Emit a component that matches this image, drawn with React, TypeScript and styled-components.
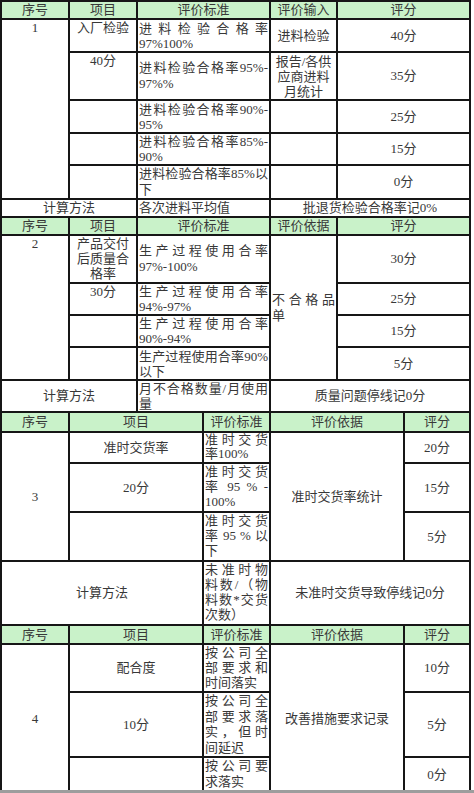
import React from 'react';
import styled, { createGlobalStyle } from 'styled-components';

const Global = createGlobalStyle`
  html, body { margin: 0; padding: 0; background: #9d9d9d; }
  #root { width: 474px; }
`;

const Page = styled.div`
  width: 474px;
  height: 790px;
  overflow: hidden;
  background: #fff;
  font-family: "Liberation Serif", "Noto Sans CJK SC", serif;
  font-size: 13px;
  line-height: 16px;
  color: #383838;
`;

const Section = styled.div<{ $cols: string; $rows: string }>`
  display: grid;
  width: 471px;
  box-sizing: border-box;
  grid-template-columns: ${p => p.$cols};
  grid-template-rows: ${p => p.$rows};
  gap: 2px;
  padding: 2px 2px 0;
  background: #161616;
`;

type V = 'start' | 'center';
type H = 'left' | 'center';

const Cell = styled.div<{ $span?: number; $rows?: number; $v?: V; $h?: H; $head?: boolean; $lh?: number }>`
  grid-column: span ${p => p.$span ?? 1};
  grid-row: span ${p => p.$rows ?? 1};
  background: ${p => (p.$head ? '#c9f2c9' : '#ffffff')};
  display: flex;
  flex-direction: column;
  justify-content: ${p => p.$v ?? 'center'};
  text-align: ${p => p.$h ?? 'center'};
  line-height: ${p => (p.$lh ? `${p.$lh}px` : 'inherit')};
  padding: 0 1px;
  overflow: hidden;
  min-width: 0;
`;

const Line = styled.span<{ $j?: boolean }>`
  display: block;
  text-align: ${p => (p.$j ? 'justify' : 'inherit')};
  text-align-last: ${p => (p.$j ? 'justify' : 'auto')};
`;

const Head = ({ children }: { children: React.ReactNode }) => <Cell $head>{children}</Cell>;

const Std = ({ lines, v = 'center', lh }: { lines: string[]; v?: V; lh?: number }) => (
  <Cell $v={v} $h="left" $lh={lh}>
    {lines.map((l, i) => (
      <Line key={i} $j={i < lines.length - 1}>
        {l}
      </Line>
    ))}
  </Cell>
);

const Empty = () => <Cell />;

const COLS_A = '66px 66px 131px 65px 131px';
const COLS_B = '66px 132px 65px 132px 64px';

export default function App() {
  return (
    <Page>
      <Global />
      <Section $cols={COLS_A} $rows="16px 31px 46px 31px 30px 32px 16px">
        <Head>序号</Head>
        <Head>项目</Head>
        <Head>评价标准</Head>
        <Head>评价输入</Head>
        <Head>评分</Head>

        <Cell $rows={5} $v="start">1</Cell>
        <Cell $v="start">入厂检验</Cell>
        <Std lines={['进料检验合格率', '97%100%']} lh={15} />
        <Cell>进料检验</Cell>
        <Cell>40分</Cell>

        <Cell $v="start">40分</Cell>
        <Std lines={['进料检验合格率95%-', '97%%']} />
        <Cell $lh={15}>
          <Line>报告/各供</Line>
          <Line>应商进料</Line>
          <Line>月统计</Line>
        </Cell>
        <Cell>35分</Cell>

        <Empty />
        <Std lines={['进料检验合格率90%-', '95%']} lh={15} />
        <Empty />
        <Cell>25分</Cell>

        <Empty />
        <Std lines={['进料检验合格率85%-', '90%']} lh={15} />
        <Empty />
        <Cell>15分</Cell>

        <Empty />
        <Std lines={['进料检验合格率85%以', '下']} />
        <Empty />
        <Cell>0分</Cell>

        <Cell $span={2}>计算方法</Cell>
        <Cell $h="left">各次进料平均值</Cell>
        <Cell $span={2}>批退货检验合格率记0%</Cell>
      </Section>

      <Section $cols={COLS_A} $rows="16px 46px 30px 30px 31px 30px">
        <Head>序号</Head>
        <Head>项目</Head>
        <Head>评价标准</Head>
        <Head>评价依据</Head>
        <Head>评分</Head>

        <Cell $rows={4} $v="start">2</Cell>
        <Cell $v="start" $lh={15}>
          <Line>产品交付</Line>
          <Line>后质量合</Line>
          <Line>格率</Line>
        </Cell>
        <Std lines={['生产过程使用合率', '97%-100%']} />
        <Cell $rows={4} $h="left">
          <Line $j>不合格品</Line>
          <Line>单</Line>
        </Cell>
        <Cell>30分</Cell>

        <Cell $v="start">30分</Cell>
        <Std lines={['生产过程使用合率', '94%-97%']} lh={15} />
        <Cell>25分</Cell>

        <Empty />
        <Std lines={['生产过程使用合率', '90%-94%']} lh={15} />
        <Cell>15分</Cell>

        <Empty />
        <Std lines={['生产过程使用合率90%', '以下']} lh={15} />
        <Cell>5分</Cell>

        <Cell $span={2}>计算方法</Cell>
        <Std v="start" lines={['月不合格数量/月使用', '量']} lh={15} />
        <Cell $span={2}>质量问题停线记0分</Cell>
      </Section>

      <Section $cols={COLS_B} $rows="18px 29px 47px 47px 62px">
        <Head>序号</Head>
        <Head>项目</Head>
        <Head>评价标准</Head>
        <Head>评价依据</Head>
        <Head>评分</Head>

        <Cell $rows={3}>3</Cell>
        <Cell>准时交货率</Cell>
        <Std v="start" lines={['准时交货', '率100%']} lh={14} />
        <Cell $rows={3}>准时交货率统计</Cell>
        <Cell>20分</Cell>

        <Cell>20分</Cell>
        <Std v="start" lines={['准时交货', '率 95 % -', '100%']} lh={15} />
        <Cell>15分</Cell>

        <Empty />
        <Std v="start" lines={['准时交货', '率 95 % 以', '下']} lh={15} />
        <Cell>5分</Cell>

        <Cell $span={2}>计算方法</Cell>
        <Std v="start" lines={['未准时物', '料数/（物', '料数*交货', '次数）']} lh={15} />
        <Cell $span={2}>未准时交货导致停线记0分</Cell>
      </Section>

      <Section $cols={COLS_B} $rows="17px 46px 63px 34px">
        <Head>序号</Head>
        <Head>项目</Head>
        <Head>评价标准</Head>
        <Head>评价依据</Head>
        <Head>评分</Head>

        <Cell $rows={3}>4</Cell>
        <Cell>配合度</Cell>
        <Std v="start" lines={['按公司全', '部要求和', '时间落实']} lh={15} />
        <Cell $rows={3}>改善措施要求记录</Cell>
        <Cell>10分</Cell>

        <Cell>10分</Cell>
        <Std v="start" lines={['按公司全', '部要求落', '实，但时', '间延迟']} lh={15.5} />
        <Cell>5分</Cell>

        <Empty />
        <Std v="start" lines={['按公司要', '求落实']} />
        <Cell>0分</Cell>
      </Section>
    </Page>
  );
}
